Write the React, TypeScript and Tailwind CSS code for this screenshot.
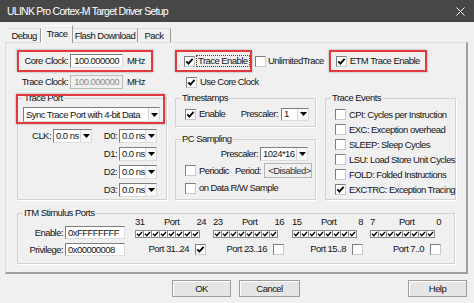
import React from "react";

type Kids = { children?: React.ReactNode; className?: string };

const Check = ({ checked = false, className = "" }: { checked?: boolean; className?: string }) => (
  <span
    className={`inline-flex w-[11px] h-[11px] shrink-0 items-center justify-center border border-t-[#7e7e7e] border-l-[#7e7e7e] border-r-[#c9c9c9] border-b-[#c9c9c9] bg-white ${className}`}
  >
    {checked && (
      <svg width="9" height="9" viewBox="0 0 9 9">
        <path d="M1.3 4.3 L3.4 6.6 L7.6 1.8" fill="none" stroke="#000" strokeWidth="1.8" />
      </svg>
    )}
  </span>
);

const Field = ({ children, className = "", disabled = false }: Kids & { disabled?: boolean }) => (
  <div
    className={`flex items-center px-[2px] border ${
      disabled
        ? "border-[#bdbdbd] bg-[#f0f0f0] text-[#8d8d8d]"
        : "border-t-[#7e7e7e] border-l-[#7e7e7e] border-r-[#dcdcdc] border-b-[#dcdcdc] bg-white"
    } ${className}`}
  >
    {children}
  </div>
);

const Select = ({ text, className = "" }: { text: string; className?: string }) => (
  <div
    className={`flex items-stretch border border-t-[#7e7e7e] border-l-[#7e7e7e] border-r-[#dcdcdc] border-b-[#dcdcdc] bg-white ${className}`}
  >
    <span className="flex-1 flex items-center px-[2px] overflow-hidden">{text}</span>
    <span className="w-[11px] shrink-0 flex items-center justify-center border-l border-[#d6d6d6] bg-[#f7f7f7]">
      <svg width="7" height="4" viewBox="0 0 7 4">
        <path d="M0 0h7L3.5 4z" fill="#000" />
      </svg>
    </span>
  </div>
);

const Group = ({ label, className = "", children }: Kids & { label: string }) => (
  <fieldset className={`border border-[#d2d2d2] shadow-[1px_1px_0_#fff] ${className}`}>
    <legend className="ml-[5px] px-[1px] h-[12px] leading-[12px]">{label}</legend>
    {children}
  </fieldset>
);

const RedBox = ({ className = "", children }: Kids) => (
  <div className={`border-2 border-[#e2393c] shadow-[0_0_2px_rgba(0,0,0,0.35)] ${className}`}>{children}</div>
);

const Bits = () => (
  <div className="flex h-[8px]">
    {Array.from({ length: 8 }).map((_, i) => (
      <span key={i} className="w-[9px] h-[8px] border border-[#8a8a8a] -ml-px first:ml-0 bg-white flex items-center justify-center">
        <svg width="7" height="6" viewBox="0 0 7 6">
          <path d="M1 2.6 L2.8 4.6 L6 1" fill="none" stroke="#000" strokeWidth="1.4" />
        </svg>
      </span>
    ))}
  </div>
);

const PortGroup = ({ hi, lo, on, className = "" }: { hi: string; lo: string; on: boolean; className?: string }) => (
  <div className={`w-[71px] -mt-[2px] flex flex-col ${className}`}>
    <div className="h-[10px] flex items-center">
      <span className="w-[29px]">{hi}</span>
      <span>Port</span>
      <span className="ml-auto">{lo}</span>
    </div>
    <div className="mt-[3px]">
      <Bits />
    </div>
    <div className="mt-[5px] h-[12px] flex items-center justify-end">
      <span>
        Port {hi}..{lo}
      </span>
      <Check checked={on} className="ml-[6px] w-[10px] h-[10px]" />
    </div>
  </div>
);

const Tab = ({ children, active = false, className = "" }: Kids & { active?: boolean }) => (
  <div
    className={`flex items-center justify-center ${
      active
        ? "h-[18px] -mb-px relative z-10 bg-[#f0f0f0] border-t border-l border-white border-r border-r-[#9a9a9a] pb-[2px]"
        : "h-[14px] border-t border-[#dcdcdc] border-r border-r-[#9a9a9a]"
    } ${className}`}
  >
    {children}
  </div>
);

const events = [
  ["CPI: Cycles per Instruction", false],
  ["EXC: Exception overhead", false],
  ["SLEEP: Sleep Cycles", false],
  ["LSU: Load Store Unit Cycles", false],
  ["FOLD: Folded Instructions", false],
  ["EXCTRC: Exception Tracing", true],
] as const;

export default function App() {
  return (
    <div className="w-[474px] h-[303px] overflow-hidden whitespace-nowrap bg-[#f0f0f0] font-['Liberation_Sans',Arial,sans-serif] text-[9.5px] tracking-[-0.55px] leading-none text-[#141414]">
      {/* title bar */}
      <div className="h-[22px] bg-[#474747] flex items-center justify-between pl-[7px] pr-[9px] text-white text-[10.5px] tracking-[-0.75px]">
        <span>ULINK Pro Cortex-M Target Driver Setup</span>
        <svg width="9" height="9" viewBox="0 0 9 9">
          <path d="M0.5 0.5L8.5 8.5M8.5 0.5L0.5 8.5" stroke="#fff" strokeWidth="1" />
        </svg>
      </div>

      {/* tabs */}
      <div className="h-[20px] flex items-end pl-[8px]">
        <Tab className="w-[33px]">Debug</Tab>
        <Tab active className="w-[32px]">
          Trace
        </Tab>
        <Tab className="w-[65px]">Flash Download</Tab>
        <Tab className="w-[33px]">Pack</Tab>
      </div>

      {/* panel */}
      <div className="ml-[5px] w-[463px] h-[232px] border-t border-l border-[#dcdcdc] border-r-2 border-b-2 border-r-[#a0a0a0] border-b-[#a0a0a0] pt-[7px] pl-[11px]">
        {/* row 1 */}
        <div className="flex items-center h-[22px]">
          <RedBox className="w-[136px] h-[22px] flex items-center">
            <span className="w-[49px] text-right">Core Clock:</span>
            <Field className="ml-[2px] w-[53px] h-[14px] justify-end pr-[3px]">100.000000</Field>
            <span className="ml-[4px]">MHz</span>
          </RedBox>
          <RedBox className="ml-[22px] w-[77px] h-[22px] flex items-center pl-[7px]">
            <Check checked />
            <span className="ml-[1px] px-[1px] h-[12px] flex items-center border border-dotted border-[#444]">
              Trace Enable
            </span>
          </RedBox>
          <Check className="ml-[3px]" />
          <span className="ml-[2px]">UnlimitedTrace</span>
          <RedBox className="ml-[5px] w-[98px] h-[22px] flex items-center pl-[5px]">
            <Check checked />
            <span className="ml-[3px]">ETM Trace Enable</span>
          </RedBox>
        </div>

        {/* row 2 */}
        <div className="mt-[2px] h-[16px] flex items-center">
          <div className="w-[158px] flex items-center">
            <span className="w-[51px] text-right">Trace Clock:</span>
            <Field disabled className="ml-[2px] w-[53px] h-[14px] justify-end pr-[3px]">
              100.000000
            </Field>
            <span className="ml-[4px]">MHz</span>
          </div>
          <Check checked className="ml-[11px]" />
          <span className="ml-[3px]">Use Core Clock</span>
        </div>

        {/* row 3 */}
        <div className="mt-[2px] flex items-start">
          <div className="relative w-[150px] h-[108px]">
            <Group label="Trace Port" className="w-[150px] h-[108px]">
              <Select text="Sync Trace Port with 4-bit Data" className="ml-[5px] mt-[3px] w-[137px] h-[15px]" />
              <div className="mt-[7px] flex flex-col gap-[4px]">
                {["D0:", "D1:", "D2:", "D3:"].map((d, i) => (
                  <div key={d} className="h-[14px] flex items-center">
                    <div className="w-[74px] flex items-center">
                      {i === 0 && (
                        <>
                          <span className="w-[33px] text-right">CLK:</span>
                          <Select text="0.0 ns" className="ml-[2px] w-[39px] h-[14px]" />
                        </>
                      )}
                    </div>
                    <span className="w-[25px] text-right">{d}</span>
                    <Select text="0.0 ns" className="ml-[2px] w-[38px] h-[14px]" />
                  </div>
                ))}
              </div>
            </Group>
            <RedBox className="absolute left-[-1px] top-[2px] w-[149px] h-[30px]" />
          </div>

          <div className="ml-[8px] w-[141px] flex flex-col">
            <Group label="Timestamps" className="h-[35px]">
              <div className="mt-[2px] h-[16px] flex items-center">
                <Check checked className="ml-[9px]" />
                <span className="ml-[3px]">Enable</span>
                <span className="ml-auto">Prescaler:</span>
                <Select text="1" className="ml-[3px] mr-[6px] w-[28px] h-[13px]" />
              </div>
            </Group>
            <Group label="PC Sampling" className="mt-[6px] h-[67px]">
              <div className="mt-[1px] h-[16px] flex items-center justify-end">
                <span>Prescaler:</span>
                <Select text="1024*16" className="ml-[2px] mr-[7px] w-[48px] h-[14px]" />
              </div>
              <div className="h-[17px] flex items-center">
                <Check className="ml-[9px]" />
                <span className="ml-[3px]">Periodic</span>
                <span className="ml-[6px]">Period:</span>
                <div className="ml-[3px] w-[48px] h-[15px] flex items-center px-[3px] border border-[#b5b5b5] bg-[#f0f0f0] text-[#333]">
                  &lt;Disabled&gt;
                </div>
              </div>
              <div className="h-[18px] flex items-center">
                <Check className="ml-[9px]" />
                <span className="ml-[3px]">on Data R/W Sample</span>
              </div>
            </Group>
          </div>

          <Group label="Trace Events" className="ml-[9px] w-[130px] h-[108px]">
            <div className="mt-[3px] flex flex-col">
              {events.map(([t, on]) => (
                <div key={t} className="h-[15px] flex items-center">
                  <Check checked={on} className="ml-[9px]" />
                  <span className="ml-[3px]">{t}</span>
                </div>
              ))}
            </div>
          </Group>
        </div>

        {/* ITM */}
        <Group label="ITM Stimulus Ports" className="mt-[7px] w-[438px] h-[57px]">
          <div className="flex items-start">
            <div className="w-[108px]">
              <div className="mt-[7px] h-[13px] flex items-center">
                <span className="w-[45px] text-right">Enable:</span>
                <Field className="ml-[2px] w-[60px] h-[13px]">0xFFFFFFFF</Field>
              </div>
              <div className="mt-[4px] h-[13px] flex items-center">
                <span className="w-[45px] text-right">Privilege:</span>
                <Field className="ml-[2px] w-[60px] h-[13px]">0x00000008</Field>
              </div>
            </div>
            <PortGroup hi="31" lo="24" on className="ml-[9px]" />
            <PortGroup hi="23" lo="16" on={false} className="ml-[7px]" />
            <PortGroup hi="15" lo="8" on={false} className="ml-[8px]" />
            <PortGroup hi="7" lo="0" on={false} className="ml-[7px]" />
          </div>
        </Group>
      </div>

      {/* buttons */}
      <div className="mt-[6px] h-[17px] flex">
        <button className="ml-[172px] w-[59px] h-[17px] border border-[#9c9c9c] bg-[#e5e5e5] shadow-[inset_1px_1px_0_#fff]">OK</button>
        <button className="ml-[8px] w-[61px] h-[17px] border border-[#9c9c9c] bg-[#e5e5e5] shadow-[inset_1px_1px_0_#fff]">Cancel</button>
        <button className="ml-[108px] w-[59px] h-[17px] border border-[#9c9c9c] bg-[#e5e5e5] shadow-[inset_1px_1px_0_#fff]">Help</button>
      </div>
    </div>
  );
}
